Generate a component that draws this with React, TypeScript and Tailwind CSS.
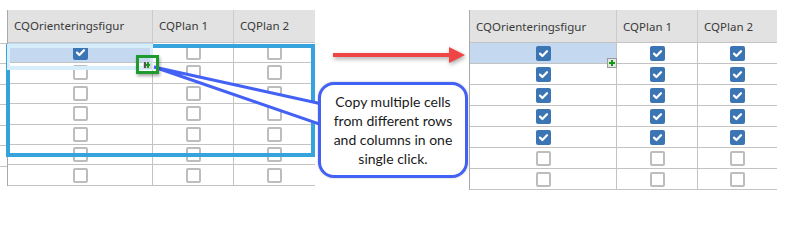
import React from 'react';

type Col = { title: string; width: string; border: boolean };

function CheckBox({ checked }: { checked: boolean }) {
  if (checked) {
    return (
      <div className="w-[15px] h-[15px] rounded-[2px] bg-[#3c75b4] flex items-center justify-center">
        <svg width="15" height="15" viewBox="0 0 15 15">
          <path d="M4 7.6 L6.4 10 L11 5.2" fill="none" stroke="white" strokeWidth="2.2" strokeLinecap="round" strokeLinejoin="round" />
        </svg>
      </div>
    );
  }
  return <div className="w-[15px] h-[15px] rounded-[2px] border-2 border-[#bdbdbd] bg-white" />;
}

function Grid({
  cols,
  isChecked,
  height,
  stub,
}: {
  cols: Col[];
  isChecked: (row: number, col: number) => boolean;
  height: string;
  stub: boolean;
}) {
  const rows = [0, 1, 2, 3, 4, 5, 6];
  return (
    <div className={`flex overflow-hidden ${height}`}>
      {stub && (
        <div className="flex flex-col w-[7px]">
          <div className="h-[35px]" />
          {rows.map((r) => (
            <div key={r} className="h-[22px] border-t border-[#c3c3c3]" />
          ))}
        </div>
      )}
      <div className="flex flex-col border-l border-[#a9a9a9]">
        <div className="flex h-[35px] bg-[#e1e2e1] border-b border-[#c4c4c4]">
          {cols.map((c) => (
            <div
              key={c.title}
              className={`${c.width} ${c.border ? 'border-r border-[#cbcbcb]' : ''} flex items-center pl-[6px] text-[11.5px] text-[#3a3a3a]`}
            >
              {c.title}
            </div>
          ))}
        </div>
        {rows.map((r) => (
          <div key={r} className="flex h-[22px] border-b border-[#c3c3c3]">
            {cols.map((c, i) => (
              <div
                key={c.title}
                className={`${c.width} ${c.border ? 'border-r border-[#c3c3c3]' : ''} ${
                  r === 0 && i === 0 ? 'bg-[#c4d9ef]' : ''
                } flex items-center justify-center`}
              >
                <CheckBox checked={isChecked(r, i)} />
              </div>
            ))}
          </div>
        ))}
      </div>
    </div>
  );
}

const leftCols: Col[] = [
  { title: 'CQOrienteringsfigur', width: 'w-[145px]', border: true },
  { title: 'CQPlan 1', width: 'w-[81px]', border: true },
  { title: 'CQPlan 2', width: 'w-[81px]', border: false },
];

const rightCols: Col[] = [
  { title: 'CQOrienteringsfigur', width: 'w-[147px]', border: true },
  { title: 'CQPlan 1', width: 'w-[81px]', border: true },
  { title: 'CQPlan 2', width: 'w-[79px]', border: false },
];

export default function App() {
  return (
    <div className="relative w-[808px] h-[240px] bg-white overflow-hidden font-['Noto_Sans',sans-serif]">
      <div className="flex items-start pt-[10px]">
        <Grid cols={leftCols} isChecked={(r, c) => r === 0 && c === 0} height="h-[176px]" stub />
        <div className="w-[154px]" />
        <Grid cols={rightCols} isChecked={(r) => r < 5} height="h-[180px]" stub={false} />
      </div>

      {/* selection frame */}
      <div className="absolute left-[6px] top-[44px] w-[309px] h-[113px] border-4 border-[#36a3dc]" />
      <div className="absolute left-[7px] top-[44px] w-[146px] h-[26px] border-x-[3px] border-y-4 border-[#d5eefa]" />

      {/* callout tail */}
      <svg className="absolute left-0 top-0" width="808" height="240">
        <polygon points="154,67 322,104 322,125" fill="white" stroke="#4361f5" strokeWidth="3" strokeLinejoin="miter" />
      </svg>

      {/* copy handle on left */}
      <div className="absolute left-[136px] top-[55px] w-[23px] h-[19px] border-[3px] border-[#1e9b2e] shadow-[1px_2px_3px_rgba(0,0,0,0.35)] flex items-center justify-center">
        <div className="relative w-[9px] h-[8px] bg-[#d3dbe2]">
          <div className="absolute left-[1px] top-[1px] w-[2px] h-[6px] bg-[#555]" />
          <div className="absolute left-[3px] top-[3px] w-[4px] h-[2px] bg-[#1a9a1a]" />
          <div className="absolute left-[4px] top-[1px] w-[2px] h-[6px] bg-[#1a9a1a]" />
        </div>
      </div>

      {/* copy handle on right */}
      <div className="absolute left-[607px] top-[58px] w-[10px] h-[10px] bg-[#e4e4e4] border border-[#9a9a9a]">
        <div className="absolute left-[1px] top-[3px] w-[6px] h-[2px] bg-[#139a13]" />
        <div className="absolute left-[3px] top-[1px] w-[2px] h-[6px] bg-[#139a13]" />
      </div>

      {/* callout */}
      <div className="absolute left-[318px] top-[82px] w-[150px] h-[96px] border-[3px] border-[#4361f5] rounded-[16px] bg-white shadow-[0_0_2px_rgba(0,0,0,0.3)] flex items-center justify-center">
        <p className="text-center text-[14px] leading-[19px] text-[#1a1a1a] font-['Lato',sans-serif]">
          Copy multiple cells
          <br />
          from different rows
          <br />
          and columns in one
          <br />
          single click.
        </p>
      </div>

      {/* red arrow */}
      <svg className="absolute left-0 top-0 drop-shadow-[1px_2px_2px_rgba(0,0,0,0.35)]" width="808" height="240">
        <line x1="333" y1="55" x2="452" y2="55" stroke="#f04545" strokeWidth="4" />
        <polygon points="449,47 465,55 449,63" fill="#f04545" />
      </svg>
    </div>
  );
}
